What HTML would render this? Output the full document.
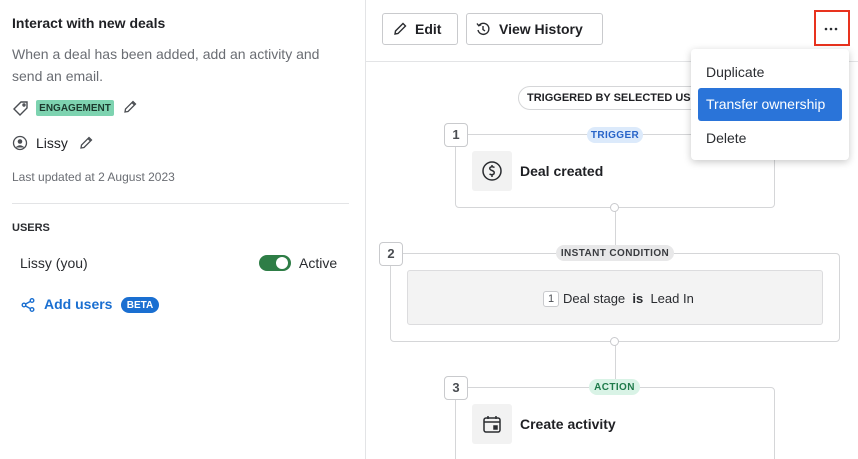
<!DOCTYPE html>
<html><head><style>
*{margin:0;padding:0;box-sizing:border-box}
html,body{width:858px;height:459px;overflow:hidden}
body{background:#fff;font-family:"Liberation Sans",sans-serif;color:#1f2024;position:relative}
.a{position:absolute}
.t{white-space:nowrap}
.num{position:absolute;width:24px;height:24px;border:1px solid #c9cacd;border-radius:4px;background:#fff;font-size:13px;font-weight:bold;color:#4a4d52;text-align:center;line-height:22px}
.box{position:absolute;border:1px solid #d5d6d8;border-radius:4px}
.pill{position:absolute;height:16px;border-radius:8px;font-size:10px;font-weight:bold;text-align:center;line-height:17px;letter-spacing:.4px}
.ic{position:absolute;width:40px;height:40px;background:#f2f2f2;border-radius:3px}
.dot{position:absolute;width:9px;height:9px;border:1px solid #c9cacd;border-radius:50%;background:#fff}
.vl{position:absolute;width:1px;background:#d5d6d8}
</style></head><body>
<div class="a" style="left:365px;top:0;width:1px;height:459px;background:#e3e4e6"></div>
<div class="a t" style="left:12px;top:15px;font-size:14px;font-weight:bold">Interact with new deals</div>
<div class="a" style="left:12px;top:43px;width:340px;font-size:14px;line-height:22px;color:#6a6d73">When a deal has been added, add an activity and send an email.</div>
<svg class="a" style="left:12px;top:99px" width="18" height="18" viewBox="0 0 18 18" fill="none" stroke="#4a4d52" stroke-width="1.4"><path d="M2 10 L9 3 L15 3 L15 9 L8 16 Z"/><circle cx="12" cy="6" r="1"/></svg>
<div class="a t" style="left:36px;top:100px;width:78px;height:16px;background:#7dd3b0;border-radius:2px;font-size:10px;font-weight:bold;text-align:center;line-height:17px;color:#1c3a2e">ENGAGEMENT</div>
<svg class="a" style="left:122px;top:99px" width="16" height="16" viewBox="0 0 16 16" fill="none" stroke="#4a4d52" stroke-width="1.3"><path d="M3 13 L3.5 10 L11 2.5 L13.5 5 L6 12.5 Z M10 3.5 L12.5 6"/></svg>
<svg class="a" style="left:12px;top:135px" width="16" height="16" viewBox="0 0 16 16"><circle cx="8" cy="8" r="6.5" fill="none" stroke="#4a4d52" stroke-width="1.3"/><circle cx="8" cy="6.5" r="2.3" fill="#4a4d52"/><path d="M3.5 12.5 Q8 8 12.5 12.5" fill="#4a4d52"/></svg>
<div class="a t" style="left:36px;top:135px;font-size:14px">Lissy</div>
<svg class="a" style="left:78px;top:135px" width="16" height="16" viewBox="0 0 16 16" fill="none" stroke="#4a4d52" stroke-width="1.3"><path d="M3 13 L3.5 10 L11 2.5 L13.5 5 L6 12.5 Z M10 3.5 L12.5 6"/></svg>
<div class="a t" style="left:12px;top:170px;font-size:12px;color:#6a6d73">Last updated at 2 August 2023</div>
<div class="a" style="left:12px;top:203px;width:337px;height:1px;background:#e3e4e6"></div>
<div class="a t" style="left:12px;top:222px;font-size:11px;font-weight:bold;color:#2a2c30">USERS</div>
<div class="a t" style="left:20px;top:255px;font-size:14px;color:#2a2c30">Lissy (you)</div>
<div class="a" style="left:259px;top:255px;width:32px;height:16px;background:#2e7d46;border-radius:8px"><div class="a" style="left:17px;top:2px;width:12px;height:12px;background:#fff;border-radius:50%"></div></div>
<div class="a t" style="left:299px;top:255px;font-size:14px;color:#2a2c30">Active</div>
<svg class="a" style="left:20px;top:297px" width="16" height="16" viewBox="0 0 16 16" fill="none" stroke="#1a6fd1" stroke-width="1.4"><circle cx="4" cy="8" r="1.8"/><circle cx="12" cy="3.5" r="1.8"/><circle cx="12" cy="12.5" r="1.8"/><path d="M5.6 7 L10.4 4.4 M5.6 9 L10.4 11.6"/></svg>
<div class="a t" style="left:44px;top:296px;font-size:14px;font-weight:bold;color:#1a6fd1">Add users</div>
<div class="a t" style="left:121px;top:297px;width:38px;height:16px;background:#1a6fd1;border-radius:8px;color:#fff;font-size:10px;font-weight:bold;text-align:center;line-height:17px">BETA</div>

<div class="a" style="left:366px;top:61px;width:492px;height:1px;background:#e3e4e6"></div>
<div class="a" style="left:382px;top:13px;width:76px;height:32px;border:1px solid #c9cacd;border-radius:3px"></div>
<svg class="a" style="left:392px;top:21px" width="16" height="16" viewBox="0 0 16 16" fill="none" stroke="#2a2c30" stroke-width="1.4"><path d="M3 13 L3.5 10 L11 2.5 L13.5 5 L6 12.5 Z"/></svg>
<div class="a t" style="left:415px;top:21px;font-size:14px;font-weight:bold">Edit</div>
<div class="a" style="left:466px;top:13px;width:137px;height:32px;border:1px solid #c9cacd;border-radius:3px"></div>
<svg class="a" style="left:475px;top:21px" width="16" height="16" viewBox="0 0 16 16" fill="none" stroke="#2a2c30" stroke-width="1.4"><path d="M3 9 A5.5 5.5 0 1 0 4 4.5 M2 2.5 L3.8 4.8 L6.2 3.6"/><path d="M8 5 L8 8.5 L10 10"/></svg>
<div class="a t" style="left:499px;top:21px;font-size:14px;font-weight:bold">View History</div>
<div class="a" style="left:814px;top:10px;width:36px;height:36px;border:2px solid #e8321e"></div>
<svg class="a" style="left:824px;top:27px" width="14" height="4" viewBox="0 0 14 4"><circle cx="2" cy="2" r="1.3" fill="#2a2c30"/><circle cx="7" cy="2" r="1.3" fill="#2a2c30"/><circle cx="12" cy="2" r="1.3" fill="#2a2c30"/></svg>

<div class="a t" style="left:518px;top:86px;width:200px;height:24px;border:1px solid #d5d6d8;border-radius:12px;font-size:11px;font-weight:bold;padding-left:8px;line-height:22px">TRIGGERED BY SELECTED USERS</div>

<div class="box" style="left:455px;top:134px;width:320px;height:74px"></div>
<div class="num" style="left:444px;top:123px">1</div>
<div class="pill" style="left:587px;top:127px;width:56px;background:#dceafb;color:#2864c8">TRIGGER</div>
<div class="ic" style="left:472px;top:151px"></div>
<svg class="a" style="left:481px;top:160px" width="22" height="22" viewBox="0 0 22 22" fill="none" stroke="#2a2c30" stroke-width="1.5"><circle cx="11" cy="11" r="9"/><path d="M13.5 7.5 Q11 6 9 7.5 Q8 9.5 11 10.5 Q14 11.5 13 13.8 Q11 15.5 8.5 14 M11 5 V6.5 M11 15 V17"/></svg>
<div class="a t" style="left:520px;top:163px;font-size:14px;font-weight:bold">Deal created</div>
<div class="vl" style="left:615px;top:208px;height:45px"></div>
<div class="dot" style="left:610px;top:203px"></div>

<div class="box" style="left:390px;top:253px;width:450px;height:89px"></div>
<div class="num" style="left:379px;top:242px">2</div>
<div class="pill" style="left:556px;top:245px;width:118px;background:#e8e8e9;color:#3a3c40">INSTANT CONDITION</div>
<div class="a" style="left:407px;top:270px;width:416px;height:55px;background:#f3f3f3;border:1px solid #dcdcde;border-radius:3px"></div>
<div class="a" style="left:543px;top:291px;width:16px;height:16px;border:1px solid #c9cacd;border-radius:3px;background:#fff;font-size:11px;text-align:center;line-height:14px;color:#4a4d52">1</div>
<div class="a t" style="left:563px;top:291px;font-size:13px;color:#2a2c30">Deal stage &nbsp;<b>is</b>&nbsp; Lead In</div>
<div class="vl" style="left:615px;top:342px;height:45px"></div>
<div class="dot" style="left:610px;top:337px"></div>

<div class="box" style="left:455px;top:387px;width:320px;height:90px"></div>
<div class="num" style="left:444px;top:376px">3</div>
<div class="pill" style="left:589px;top:379px;width:51px;background:#d9f3e6;color:#1e7a4a">ACTION</div>
<div class="ic" style="left:472px;top:404px"></div>
<svg class="a" style="left:481px;top:413px" width="22" height="22" viewBox="0 0 22 22" fill="none" stroke="#2a2c30" stroke-width="1.5"><rect x="3" y="5" width="16" height="14" rx="2"/><path d="M3 9 H19 M7 3 V6 M15 3 V6"/><rect x="13" y="13" width="3" height="3" fill="#2a2c30"/></svg>
<div class="a t" style="left:520px;top:416px;font-size:14px;font-weight:bold">Create activity</div>

<div class="a" style="left:691px;top:49px;width:158px;height:111px;background:#fff;border-radius:4px;box-shadow:0 2px 8px rgba(0,0,0,.22)"></div>
<div class="a t" style="left:706px;top:64px;font-size:14px;color:#2a2c30">Duplicate</div>
<div class="a t" style="left:698px;top:88px;width:144px;height:33px;background:#2a74d9;border-radius:3px;color:#fff;font-size:14px;padding-left:8px;line-height:33px">Transfer ownership</div>
<div class="a t" style="left:706px;top:130px;font-size:14px;color:#2a2c30">Delete</div>
</body></html>
